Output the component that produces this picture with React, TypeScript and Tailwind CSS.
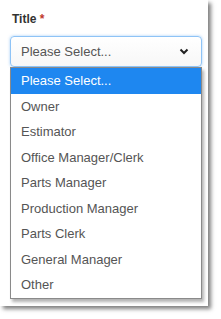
import React from 'react';

const options = [
    'Please Select...',
    'Owner',
    'Estimator',
    'Office Manager/Clerk',
    'Parts Manager',
    'Production Manager',
    'Parts Clerk',
    'General Manager',
    'Other',
];

function Chevron() {
    return (
        <svg width="10" height="7" viewBox="0 0 10 7" className="text-[#222]">
            <path d="M1.5 1.5 L5 5 L8.5 1.5" fill="none" stroke="currentColor" strokeWidth="2" />
        </svg>
    );
}

export default function App() {
    return (
        <div className="w-[221px] h-[319px] bg-white font-['Liberation_Sans',Arial,sans-serif]">
            <div className="w-[208px] h-[306px] bg-white shadow-[3px_3px_4px_rgba(0,0,0,0.5)] pt-[12px]">
                <div className="pl-[12px] text-[12px] font-bold text-[#333] leading-[14px]">
                    Title <span className="text-[#c0392b]">*</span>
                </div>
                <div className="ml-[10px] w-[192px] mt-[10px] relative">
                    <div className="h-[31px] rounded-[4px] border border-[#8ec3f6] shadow-[0_0_3px_rgba(100,170,240,0.6)] bg-gradient-to-b from-white to-[#f7f7f7] flex items-center justify-between pl-[10px] pr-[12px]">
                        <span className="text-[13px] text-[#555]">Please Select...</span>
                        <Chevron />
                    </div>
                    <div className="border border-[#8a8a8a] bg-white shadow-[2px_3px_3px_rgba(0,0,0,0.3)]">
                        {options.map((opt, i) => (
                            <div
                                key={opt}
                                className={
                                    i === 0
                                        ? 'h-[25.5px] flex items-center pl-[10px] text-[13px] bg-[#1e87f0] text-white'
                                        : 'h-[25.5px] flex items-center pl-[10px] text-[13px] text-[#555]'
                                }
                            >
                                {opt}
                            </div>
                        ))}
                    </div>
                </div>
            </div>
        </div>
    );
}
